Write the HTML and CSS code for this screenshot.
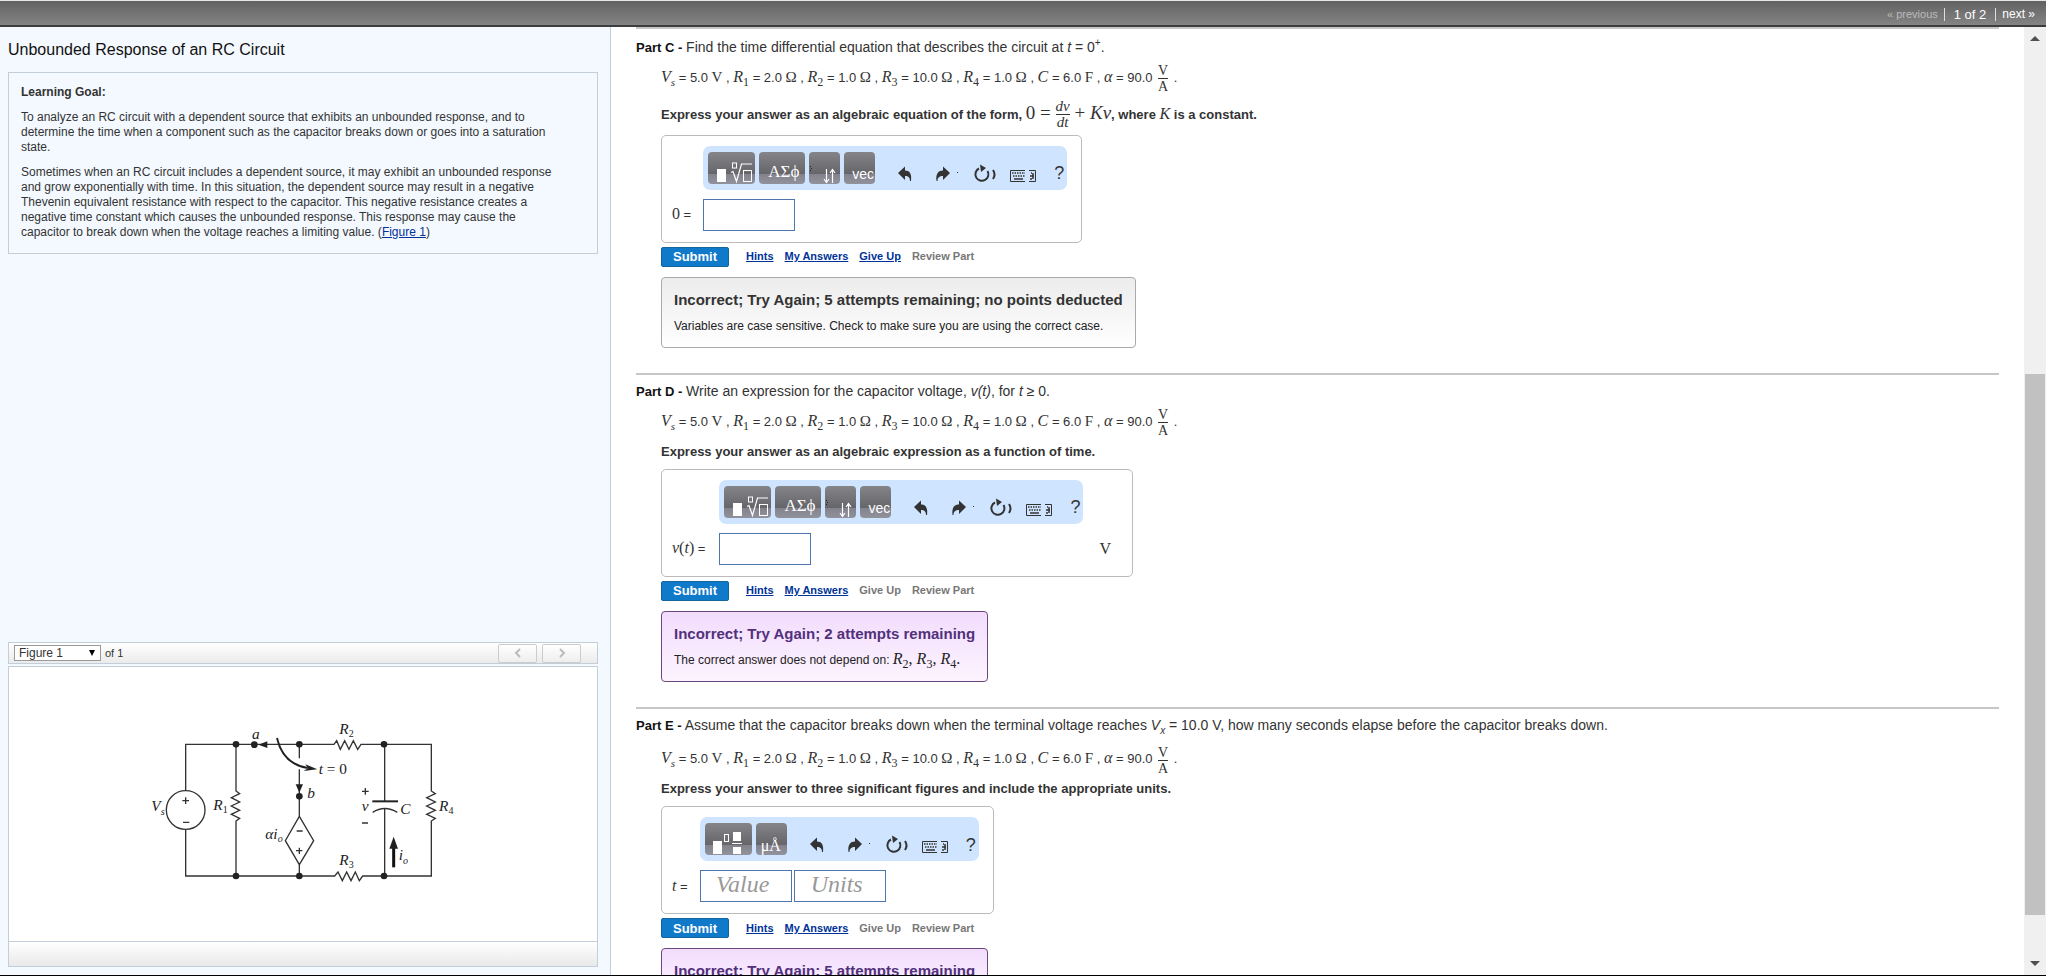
FILE: index.html
```html
<!DOCTYPE html>
<html lang="en">
<head>
  <meta charset="utf-8">
  <meta name="viewport" content="width=device-width,initial-scale=1">
  <title>Unbounded Response of an RC Circuit</title>
  <link rel="stylesheet" href="styles.css">
</head>
<body>
  <!-- shared toolbar icons -->
  <svg class="sprite" aria-hidden="true">
    <symbol id="icon-templates" viewBox="0 0 47 32">
      <rect x="9" y="17" width="9" height="13" fill="#fff"/>
      <rect x="24.5" y="11" width="4" height="5" fill="none" stroke="#fff"/>
      <path d="M23 20.5l2-1 3.5 10 5-17.5H44" fill="none" stroke="#fff" stroke-width="1.2"/>
      <rect x="35.5" y="18.5" width="8" height="11" fill="none" stroke="#fff"/>
    </symbol>
    <symbol id="icon-arrows" viewBox="0 0 31 32">
      <path d="M17.500 17v13M15 27l2.500 3.500 2.500-3.500M23.500 31V18M21 21l2.500-3.500 2.500 3.500" fill="none" stroke="#fff" stroke-width="1.2"/>
      <path d="M1 14h1v1H1zM2 16h1v1H2zM1 18h1v1H1z" fill="#222"/>
    </symbol>
    <symbol id="icon-units-templates" viewBox="0 0 47 32">
      <rect x="8" y="18" width="9" height="13" fill="#fff"/>
      <rect x="19.500" y="11.500" width="4" height="7" fill="none" stroke="#fff"/>
      <path d="M28 9h8v9h-8zM27 20h10v1H27zM28 24h8v7h-8z" fill="#fff"/>
    </symbol>
    <symbol id="icon-undo" viewBox="0 0 38 44">
      <path d="M12 27l7-6.500v4c4.500 0 7 3 6 10.500h-1c0-3.500-1.500-5-5-5v4z" fill="#333"/>
    </symbol>
    <symbol id="icon-redo" viewBox="0 0 38 44">
      <path d="M26 27l-7-6.500v4c-4.500 0-7.500 3-6.500 10.500h1c0-3.500 2-5 5.500-5v4z" fill="#333"/>
      <path d="M33 26h1v1h-1z" fill="#333"/>
    </symbol>
    <symbol id="icon-reset" viewBox="0 0 38 44">
      <path d="M17 22.500a6.500 6.500 0 1 0 8.500 2.500" fill="none" stroke="#333" stroke-width="2"/>
      <path d="M18 18.500l6 3.500-5 4z" fill="#333"/>
      <path d="M31 24q3 4.500 0 9" fill="none" stroke="#333" stroke-width="2"/>
    </symbol>
    <symbol id="icon-keyboard" viewBox="0 0 38 44">
      <path d="M25 24.500H10.500v11H25M29 24.500h6.500v11H29" fill="none" stroke="#333"/>
      <path d="M12 27h13M13 30h12" fill="none" stroke="#333" stroke-width="1.500" stroke-dasharray="1.500 1"/>
      <path d="M14 33h9M30 33h2M31 27h1M30 30h4M33 27v6" fill="none" stroke="#333" stroke-width="1.500"/>
    </symbol>
  </svg>

  <header class="topbar">
    <span class="previous">« previous</span>
    <span class="position">1 of 2</span>
    <a href="#next">next »</a>
  </header>

  <div class="page">
    <aside class="sidebar">
      <h1>Unbounded Response of an RC Circuit</h1>
      <section class="goal">
        <h2>Learning Goal:</h2>
        <p>To analyze an RC circuit with a dependent source that exhibits an unbounded response, and to determine the time when a component such as the capacitor breaks down or goes into a saturation state.</p>
        <p>Sometimes when an RC circuit includes a dependent source, it may exhibit an unbounded response and grow exponentially with time. In this situation, the dependent source may result in a negative Thevenin equivalent resistance with respect to the capacitor. This negative resistance creates a negative time constant which causes the unbounded response. This response may cause the capacitor to break down when the voltage reaches a limiting value. (<a href="#figure">Figure 1</a>)</p>
      </section>

      <section class="figure" id="figure">
        <div class="figure-bar">
          <div class="figure-select">
            <select id="figure-number" aria-label="Figure">
              <option>Figure 1</option>
            </select>
            <svg class="caret" viewBox="0 0 6 6"><path d="M0 0h6L3 6z"/></svg>
          </div>
          <label for="figure-number">of 1</label>
          <button class="figure-nav first" title="Previous figure" disabled>
            <svg viewBox="0 0 8 10"><path d="M6 1L2 5l4 4"/></svg>
          </button>
          <button class="figure-nav" title="Next figure" disabled>
            <svg viewBox="0 0 8 10"><path d="M2 1l4 4-4 4"/></svg>
          </button>
        </div>
        <div class="figure-box">
          <div class="figure-stage">
            <svg class="circuit" viewBox="9 12 1020 540" role="img" aria-label="RC circuit with a dependent source">
              <g class="wire">
                <path d="M167 240V103H612l8-11 11 26 13-26 13 26 13-26 13 26 10-15H904V243l12 8-26 12 26 13-26 12 26 13-26 12 26 12-12 8V498H698l-10 14-12-26-13 26-13-26-13 26-13-26-10 12H167V360"/>
                <path d="M318 103V243l11 8-25 12 25 13-25 12 25 13-25 12 25 12-11 8V498"/>
                <path d="M508 103v42M508 178v141M508 464v34"/>
                <circle cx="167" cy="300" r="58"/>
                <path d="M508 319l43 73-43 72-42-72z"/>
                <path d="M764 103V273M764 295V498"/>
                <path d="M728 307q36-23 74 0"/>
                <path d="M157 272h20M167 262v20M159 337h19M500 363h18M498 422h19M508 413v19M696 244h20M706 234v20M696 339h18"/>
              </g>
              <path class="plate" d="M727 274h77"/>
              <path class="throw" d="M441 84q18 78 92 90"/>
              <path class="flow" d="M791 472v-62"/>
              <path d="M562 178l-36-15 8 12-13 8zM385 104l27-10v20zM508 248l-11-25h22zM791 380l-13 36h26z"/>
              <circle cx="318" cy="103" r="10"/>
              <circle cx="373" cy="104" r="10"/>
              <circle cx="508" cy="103" r="10"/>
              <circle cx="762" cy="103" r="10"/>
              <circle cx="508" cy="259" r="10"/>
              <circle cx="318" cy="498" r="10"/>
              <circle cx="508" cy="498" r="10"/>
              <circle cx="762" cy="498" r="10"/>
              <g class="name">
                <text x="366" y="88">a</text>
                <text x="532" y="263">b</text>
                <text x="566" y="192">t <tspan class="upright">= 0</tspan></text>
                <text x="64" y="304">V<tspan class="low" dy="12">s</tspan></text>
                <text x="250" y="299">R<tspan class="low upright" dy="9">1</tspan></text>
                <text x="628" y="73">R<tspan class="low upright" dy="9">2</tspan></text>
                <text x="628" y="466">R<tspan class="low upright" dy="9">3</tspan></text>
                <text x="927" y="303">R<tspan class="low upright" dy="9">4</tspan></text>
                <text x="811" y="312">C</text>
                <text x="695" y="303">v</text>
                <text x="406" y="387">αi<tspan class="low" dy="10">o</tspan></text>
                <text x="806" y="451">i<tspan class="low" dy="10">o</tspan></text>
              </g>
            </svg>
          </div>
          <div class="figure-footer"></div>
        </div>
      </section>
    </aside>

    <main>
      <section class="part">
        <h2><b>Part C -</b> Find the time differential equation that describes the circuit at <i>t</i> = 0<sup>+</sup>.</h2>
        <div class="part-body">
          <p class="given"><i>V<sub>s</sub></i> = 5.0 <span class="unit">V</span> , <i>R</i><sub>1</sub> = 2.0 <span class="unit">Ω</span> , <i>R</i><sub>2</sub> = 1.0 <span class="unit">Ω</span> , <i>R</i><sub>3</sub> = 10.0 <span class="unit">Ω</span> , <i>R</i><sub>4</sub> = 1.0 <span class="unit">Ω</span> , <i>C</i> = 6.0 <span class="unit">F</span> , <i>α</i> = 90.0 <span class="fraction"><span>V</span><span>A</span></span> .</p>
          <p class="instruction with-math">Express your answer as an algebraic equation of the form, <span class="equation">0 = <span class="fraction"><i>dv</i><i>dt</i></span> + <i>Kv</i></span>, where <i>K</i> is a constant.</p>
          <div class="answer">
            <div class="toolbar">
              <button class="key wide" title="Templates"><svg><use href="#icon-templates"/></svg></button>
              <button class="key greek" title="Symbols">ΑΣϕ</button>
              <button class="key" title="Arrows"><svg><use href="#icon-arrows"/></svg></button>
              <button class="key vec" title="Vectors">vec</button>
              <button class="tool undo" title="Undo"><svg><use href="#icon-undo"/></svg></button>
              <button class="tool" title="Redo"><svg><use href="#icon-redo"/></svg></button>
              <button class="tool" title="Reset"><svg><use href="#icon-reset"/></svg></button>
              <button class="tool" title="Keyboard shortcuts"><svg><use href="#icon-keyboard"/></svg></button>
              <button class="tool help" title="Help">?</button>
            </div>
            <label for="answer-c"><span class="math">0</span> =</label>
            <div class="fields"><input type="text" id="answer-c"></div>
          </div>
          <div class="actions">
            <button class="submit">Submit</button>
            <a href="#hints">Hints</a>
            <a href="#answers">My Answers</a>
            <a href="#giveup">Give Up</a>
            <span>Review Part</span>
          </div>
          <div class="feedback">
            <h3>Incorrect; Try Again; 5 attempts remaining; no points deducted</h3>
            <p>Variables are case sensitive. Check to make sure you are using the correct case.</p>
          </div>
        </div>
      </section>

      <section class="part">
        <h2><b>Part D -</b> Write an expression for the capacitor voltage, <i>v(t)</i>, for <i>t</i> ≥ 0.</h2>
        <div class="part-body">
          <p class="given"><i>V<sub>s</sub></i> = 5.0 <span class="unit">V</span> , <i>R</i><sub>1</sub> = 2.0 <span class="unit">Ω</span> , <i>R</i><sub>2</sub> = 1.0 <span class="unit">Ω</span> , <i>R</i><sub>3</sub> = 10.0 <span class="unit">Ω</span> , <i>R</i><sub>4</sub> = 1.0 <span class="unit">Ω</span> , <i>C</i> = 6.0 <span class="unit">F</span> , <i>α</i> = 90.0 <span class="fraction"><span>V</span><span>A</span></span> .</p>
          <p class="instruction">Express your answer as an algebraic expression as a function of time.</p>
          <div class="answer has-unit">
            <div class="toolbar">
              <button class="key wide" title="Templates"><svg><use href="#icon-templates"/></svg></button>
              <button class="key greek" title="Symbols">ΑΣϕ</button>
              <button class="key" title="Arrows"><svg><use href="#icon-arrows"/></svg></button>
              <button class="key vec" title="Vectors">vec</button>
              <button class="tool undo" title="Undo"><svg><use href="#icon-undo"/></svg></button>
              <button class="tool" title="Redo"><svg><use href="#icon-redo"/></svg></button>
              <button class="tool" title="Reset"><svg><use href="#icon-reset"/></svg></button>
              <button class="tool" title="Keyboard shortcuts"><svg><use href="#icon-keyboard"/></svg></button>
              <button class="tool help" title="Help">?</button>
            </div>
            <label for="answer-d"><span class="math"><i>v</i>(<i>t</i>)</span> =</label>
            <div class="fields"><input type="text" id="answer-d"></div>
            <span class="answer-unit">V</span>
          </div>
          <div class="actions">
            <button class="submit">Submit</button>
            <a href="#hints">Hints</a>
            <a href="#answers">My Answers</a>
            <span>Give Up</span>
            <span>Review Part</span>
          </div>
          <div class="feedback wrong">
            <h3>Incorrect; Try Again; 2 attempts remaining</h3>
            <p>The correct answer does not depend on: <span class="math"><i>R</i><sub>2</sub>, <i>R</i><sub>3</sub>, <i>R</i><sub>4</sub>.</span></p>
          </div>
        </div>
      </section>

      <section class="part">
        <h2><b>Part E -</b> Assume that the capacitor breaks down when the terminal voltage reaches <i>V<sub>x</sub></i> = 10.0 V, how many seconds elapse before the capacitor breaks down.</h2>
        <div class="part-body">
          <p class="given"><i>V<sub>s</sub></i> = 5.0 <span class="unit">V</span> , <i>R</i><sub>1</sub> = 2.0 <span class="unit">Ω</span> , <i>R</i><sub>2</sub> = 1.0 <span class="unit">Ω</span> , <i>R</i><sub>3</sub> = 10.0 <span class="unit">Ω</span> , <i>R</i><sub>4</sub> = 1.0 <span class="unit">Ω</span> , <i>C</i> = 6.0 <span class="unit">F</span> , <i>α</i> = 90.0 <span class="fraction"><span>V</span><span>A</span></span> .</p>
          <p class="instruction">Express your answer to three significant figures and include the appropriate units.</p>
          <div class="answer">
            <div class="toolbar">
              <button class="key wide" title="Templates"><svg><use href="#icon-units-templates"/></svg></button>
              <button class="key units" title="Units">μÅ</button>
              <button class="tool undo" title="Undo"><svg><use href="#icon-undo"/></svg></button>
              <button class="tool" title="Redo"><svg><use href="#icon-redo"/></svg></button>
              <button class="tool" title="Reset"><svg><use href="#icon-reset"/></svg></button>
              <button class="tool" title="Keyboard shortcuts"><svg><use href="#icon-keyboard"/></svg></button>
              <button class="tool help" title="Help">?</button>
            </div>
            <label for="answer-e"><span class="math"><i>t</i></span> =</label>
            <div class="fields">
              <input type="text" id="answer-e" placeholder="Value">
              <input type="text" placeholder="Units" aria-label="Units">
            </div>
          </div>
          <div class="actions">
            <button class="submit">Submit</button>
            <a href="#hints">Hints</a>
            <a href="#answers">My Answers</a>
            <span>Give Up</span>
            <span>Review Part</span>
          </div>
          <div class="feedback wrong">
            <h3>Incorrect; Try Again; 5 attempts remaining</h3>
          </div>
        </div>
      </section>
    </main>

    <div class="scrollbar" aria-hidden="true">
      <svg viewBox="0 0 10 5"><path d="M0 5l5-5 5 5z"/></svg>
      <div class="track"><div class="thumb"></div></div>
      <svg viewBox="0 0 10 5"><path d="M0 0l5 5 5-5z"/></svg>
    </div>
  </div>
</body>
</html>
```
FILE: styles.css
```css
:root {
  --sans: "Liberation Sans", Arial, sans-serif;
  --serif: "Liberation Serif", "Times New Roman", serif;
  --panel-border: 1px solid #c3cedb;
}
* {
  box-sizing: border-box;
}
body {
  margin: 0;
  height: 100vh;
  display: flex;
  flex-direction: column;
  overflow: hidden;
  border-bottom: 1px solid #000;
  font: 13px/15px var(--sans);
  color: #333;
  background: #fff;
}
h1, h2, h3, p {
  margin: 0;
}
button, input, select {
  font-family: inherit;
  color: inherit;
}
a {
  color: #039;
}
.sprite {
  display: none;
}

/* top navigation */
.topbar {
  flex: none;
  display: flex;
  justify-content: flex-end;
  align-items: center;
  height: 27px;
  padding: 3px 11px 0 0;
  border-top: 1px solid #e4e8e4;
  border-bottom: 2px solid #3c3c3c;
  background: linear-gradient(#626262, #848484);
  font-size: 12px;
  color: #fff;
}
.topbar .previous {
  font-size: 11px;
  color: #bbb;
}
.topbar .position {
  padding: 0 9px;
  margin: 0 6px;
  border-left: 1px solid #ddd;
  border-right: 1px solid #ddd;
  font-size: 13px;
  line-height: 13px;
}
.topbar a {
  color: inherit;
  text-decoration: none;
}

.page {
  flex: 1;
  min-height: 0;
  display: flex;
}

/* left column */
.sidebar {
  flex: none;
  width: 611px;
  display: flex;
  flex-direction: column;
  padding: 13px 12px 8px 8px;
  border-right: var(--panel-border);
  background: #f4f9ff;
}
.sidebar h1 {
  font-size: 16px;
  line-height: 20px;
  font-weight: normal;
  color: #111;
}
.goal {
  margin-top: 12px;
  padding: 12px 36px 13px 12px;
  border: var(--panel-border);
  font-size: 12px;
}
.goal h2 {
  font-size: 12px;
  line-height: 15px;
}
.goal p {
  margin-top: 10px;
}
.figure {
  margin-top: auto;
}
.figure-bar {
  display: flex;
  align-items: center;
  height: 22px;
  padding: 0 16px 0 5px;
  border: var(--panel-border);
  background: linear-gradient(#fff, #ebebeb);
  font-size: 12px;
}
.figure-select {
  position: relative;
  margin-right: 4px;
}
.figure-select select {
  display: block;
  width: 87px;
  height: 16px;
  padding: 0 4px;
  border: 1px solid #999;
  background: #fff;
  appearance: none;
  font-size: 12px;
  line-height: 14px;
}
.caret {
  position: absolute;
  right: 6px;
  top: 5px;
  width: 6px;
  height: 6px;
  pointer-events: none;
}
.figure-bar label {
  font-size: 11px;
}
.figure-nav {
  width: 39px;
  height: 19px;
  margin-left: 5px;
  padding: 0;
  border: 1px solid #ccc;
  border-radius: 2px;
  background: linear-gradient(#fff, #eee);
}
.figure-nav.first {
  margin-left: auto;
}
.figure-nav svg {
  display: block;
  width: 8px;
  height: 10px;
  margin: 0 auto;
  fill: none;
  stroke: #bbb;
  stroke-width: 2;
}
.figure-box {
  margin-top: 2px;
  border: var(--panel-border);
  background: #fff;
}
.figure-stage {
  padding: 47px 0;
}
.figure-footer {
  height: 25px;
  border-top: var(--panel-border);
  background: linear-gradient(#fff, #e9e9e9);
}
.circuit {
  display: block;
  width: 340px;
  height: 180px;
  margin: 0 auto;
  fill: #222;
}
.circuit .wire {
  fill: none;
  stroke: #333;
  stroke-width: 4;
}
.circuit .plate, .circuit .throw {
  fill: none;
  stroke: #222;
  stroke-width: 6;
}
.circuit .flow {
  stroke: #111;
  stroke-width: 9;
}
.circuit .name {
  font: italic 46px var(--serif);
}
.circuit .upright {
  font-style: normal;
}
.circuit .low {
  font-size: 30px;
}

/* question parts */
main {
  flex: 1;
  min-width: 0;
  overflow: hidden;
  padding: 0 25px;
}
.part {
  padding: 7px 0 25px;
  border-top: 2px solid #c6c6c6;
}
.part h2 {
  font-size: 14px;
  line-height: 18px;
  font-weight: normal;
}
.part h2 b {
  font-size: 13px;
  line-height: 0;
  color: #111;
}
sub, sup {
  font-size: 10px;
  line-height: 0;
}
.part h2 sub, .part h2 sup {
  line-height: 14px;
}
.part-body {
  padding-left: 25px;
}
.given {
  margin-top: 4px;
  line-height: 34px;
  height: 34px;
}
.given i, .given .unit, .math, .equation {
  font-family: var(--serif);
  font-size: 16px;
}
.given .unit {
  font-size: 15px;
}
.given sub, .math sub {
  font-family: var(--serif);
  font-size: 12px;
}
.given i sub {
  font-size: 11px;
}
.math {
  line-height: 0;
}
.fraction {
  display: inline-flex;
  flex-direction: column;
  vertical-align: middle;
  text-align: center;
  font-family: var(--serif);
  font-size: 15px;
  line-height: 15px;
}
.fraction > :first-child {
  border-bottom: 1px solid #333;
}
.given .fraction {
  font-size: 14px;
  margin: 0 2px;
}
.instruction {
  margin-top: 5px;
  font-weight: bold;
  line-height: 18px;
}
.instruction.with-math {
  height: 28px;
  line-height: 28px;
}
.instruction i {
  font-family: var(--serif);
  font-size: 16px;
  font-weight: normal;
}
.equation {
  font-size: 19px;
  font-weight: normal;
}
.equation > i {
  font-size: 19px;
}
.equation .fraction i {
  font-size: 15px;
}

.answer {
  display: grid;
  grid-template-columns: auto auto;
  column-gap: 12px;
  row-gap: 9px;
  align-items: center;
  width: fit-content;
  margin-top: 8px;
  padding: 10px 14px 11px 10px;
  border: 1px solid #bbb;
  border-radius: 5px;
}
.answer.has-unit {
  grid-template-columns: auto auto auto;
  padding-right: 21px;
}
.answer.has-unit label {
  padding-right: 2px;
}
.answer-unit {
  padding-left: 4px;
  font: 16px var(--serif);
}
.toolbar {
  grid-column: 2;
  display: flex;
  height: 44px;
  padding-left: 5px;
  border-radius: 7px;
  background: #cfe5ff;
}
.answer label {
  grid-column: 1;
  white-space: nowrap;
}
.key {
  width: 31px;
  height: 32px;
  margin: 6px 4px 0 0;
  padding: 0;
  border: none;
  border-radius: 4px;
  overflow: hidden;
  background: linear-gradient(#858589, #66666a 68%, #83838d 70%, #92929c);
  color: #fff;
  text-align: left;
  white-space: nowrap;
}
.key.wide {
  width: 47px;
}
.key.greek {
  width: 46px;
  padding: 9px 0 0 9px;
  font: 17px var(--serif);
}
.key.vec {
  padding: 12px 0 0 8px;
  font: 14px var(--sans);
}
.key.units {
  padding: 14px 0 0 5px;
  font: 16px var(--serif);
}
.key svg, .tool svg {
  display: block;
  width: 100%;
  height: 100%;
}
.tool {
  width: 38px;
  height: 44px;
  padding: 0;
  border: none;
  background: none;
}
.tool.undo {
  margin-left: 7px;
}
.tool.help {
  width: 29px;
  padding: 12px 3px 0 0;
  text-align: right;
  font-size: 18px;
}
.fields {
  display: flex;
  gap: 2px;
}
.fields input {
  width: 92px;
  height: 32px;
  padding: 0 10px 3px 4px;
  border: 1px solid #4f76ac;
  background: #fff;
  text-align: center;
  font: 24px var(--serif);
}
.fields input::placeholder {
  color: #999;
  font-style: italic;
}

.actions {
  display: flex;
  align-items: center;
  gap: 11px;
  margin-top: 4px;
  font-size: 11px;
  font-weight: bold;
  color: #777;
}
.submit {
  width: 68px;
  height: 20px;
  margin-right: 6px;
  padding: 0;
  border: 1px solid #1464a0;
  border-radius: 2px;
  background: #0f79ca;
  color: #fff;
  font-size: 13px;
  font-weight: bold;
}
.feedback {
  width: fit-content;
  margin-top: 10px;
  padding: 12px 12px 13px;
  border: 1px solid #aaa;
  border-radius: 4px;
  background: linear-gradient(#ececec, #fff);
}
.feedback h3 {
  font-size: 15px;
  line-height: 20px;
}
.feedback p {
  margin-top: 9px;
  font-size: 12px;
  line-height: 15px;
  color: #222;
}
.feedback.wrong {
  border-color: #6b4780;
  background: linear-gradient(#f2dcfd, #fdf4ff);
}
.feedback.wrong h3 {
  color: #52307c;
}

/* scrollbar column */
.scrollbar {
  flex: none;
  width: 22px;
  display: flex;
  flex-direction: column;
  align-items: center;
  padding: 9px 1px;
  background: #f0f0f0;
}
.scrollbar svg {
  width: 10px;
  height: 5px;
  fill: #505050;
}
.track {
  flex: 1;
  width: 100%;
  display: flex;
  flex-direction: column;
  padding: 333px 0 46px;
}
.thumb {
  flex: 1;
  background: #c1c1c1;
}
```
